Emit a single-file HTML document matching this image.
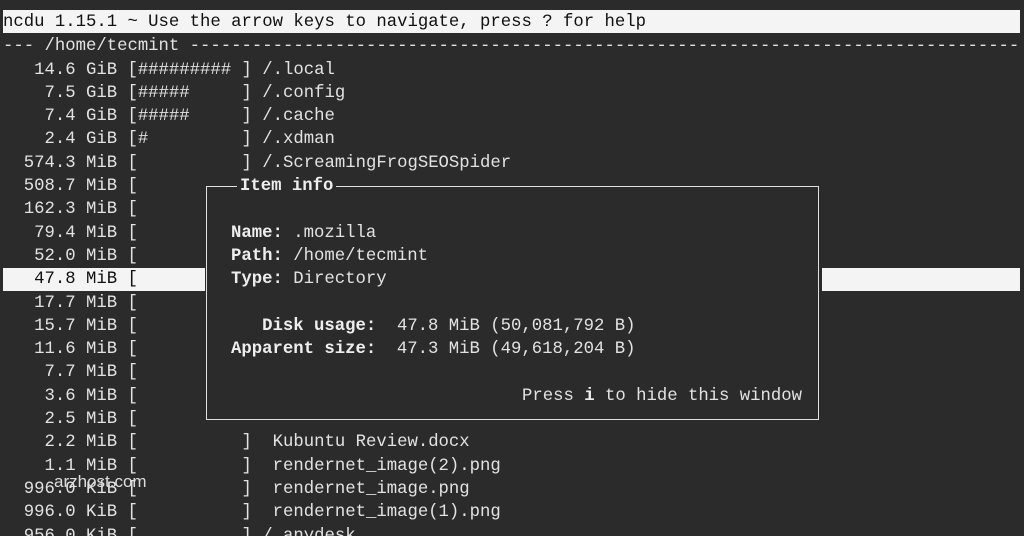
<!DOCTYPE html>
<html><head><meta charset="utf-8"><style>
html,body{margin:0;padding:0;background:#2b2b2b;width:1024px;height:536px;overflow:hidden;position:relative}
.l{position:absolute;left:3px;white-space:pre;font-family:"Liberation Mono",monospace;font-size:17.3px;line-height:23.3px;height:23.3px;color:#e2e2e2}
.inv{background:#f4f4f4;color:#111}
#pop{position:absolute;left:205px;top:176px;width:617px;height:245px;background:#2b2b2b}
#box{position:absolute;left:206px;top:186px;width:611px;height:232px;border:1.5px solid #e0e0e0}
.p{position:absolute;white-space:pre;font-family:"Liberation Mono",monospace;font-size:17.3px;line-height:23.3px;color:#e2e2e2}
b{font-weight:bold;color:#eee}
#wm{position:absolute;left:54px;top:472px;font-family:"Liberation Sans",sans-serif;font-size:17px;color:#ddd}
.w{position:absolute;top:2px;left:0;width:1024px;height:536px}
</style></head><body>
<div class="l inv" style="top:10px;height:23px;width:1017px;line-height:23.3px"><span style="position:relative;top:1px">ncdu 1.15.1 ~ Use the arrow keys to navigate, press ? for help</span></div>
<div class="w">
<div class="l" style="top:33px;width:1017px;overflow:hidden">--- /home/tecmint -----------------------------------------------------------------------------------</div>
<div class="l" style="top:56.5px">   14.6 GiB [######### ] /.local</div>
<div class="l" style="top:79.8px">    7.5 GiB [#####     ] /.config</div>
<div class="l" style="top:103.1px">    7.4 GiB [#####     ] /.cache</div>
<div class="l" style="top:126.4px">    2.4 GiB [#         ] /.xdman</div>
<div class="l" style="top:149.7px">  574.3 MiB [          ] /.ScreamingFrogSEOSpider</div>
<div class="l" style="top:173px">  508.7 MiB [</div>
<div class="l" style="top:196.3px">  162.3 MiB [</div>
<div class="l" style="top:219.6px">   79.4 MiB [</div>
<div class="l" style="top:242.9px">   52.0 MiB [</div>
<div class="l inv" style="top:266.2px;width:1017px">   47.8 MiB [</div>
<div class="l" style="top:289.5px">   17.7 MiB [</div>
<div class="l" style="top:312.8px">   15.7 MiB [</div>
<div class="l" style="top:336.1px">   11.6 MiB [</div>
<div class="l" style="top:359.4px">    7.7 MiB [</div>
<div class="l" style="top:382.7px">    3.6 MiB [</div>
<div class="l" style="top:406px">    2.5 MiB [</div>
<div class="l" style="top:429.3px">    2.2 MiB [          ]  Kubuntu Review.docx</div>
<div class="l" style="top:452.6px">    1.1 MiB [          ]  rendernet_image(2).png</div>
<div class="l" style="top:475.9px">  996.0 KiB [          ]  rendernet_image.png</div>
<div class="l" style="top:499.2px">  996.0 KiB [          ]  rendernet_image(1).png</div>
<div class="l" style="top:522.5px">  956.0 KiB [          ] /.anydesk</div>
</div>
<div id="pop"></div>
<div id="box"></div>
<div class="w">
<div class="p" style="left:237px;top:173px;background:#2b2b2b;padding:0 3px"><b>Item info</b></div>
<div class="p" style="left:231px;top:219.6px"><b>Name:</b> .mozilla</div>
<div class="p" style="left:231px;top:242.9px"><b>Path:</b> /home/tecmint</div>
<div class="p" style="left:231px;top:266.2px"><b>Type:</b> Directory</div>
<div class="p" style="left:231px;top:312.8px">   <b>Disk usage:</b>  47.8 MiB (50,081,792 B)</div>
<div class="p" style="left:231px;top:336.1px"><b>Apparent size:</b>  47.3 MiB (49,618,204 B)</div>
<div class="p" style="left:522px;top:382.7px">Press <b>i</b> to hide this window</div>
</div>
<div id="wm">arzhost.com</div>
</body></html>
